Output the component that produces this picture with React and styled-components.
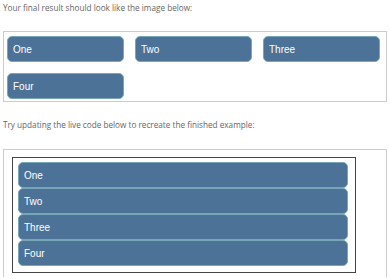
import styled, { createGlobalStyle } from "styled-components";

const GlobalStyle = createGlobalStyle`
  body {
    margin: 0;
    background: #fff;
    font-family: "Liberation Sans", Arial, sans-serif;
  }
`;

const Page = styled.div`
  width: 390px;
  padding: 0 3px;
  box-sizing: border-box;
`;

const Caption = styled.p`
  margin: ${(p) => p.$top || 0}px 0 0;
  font-family: "Open Sans", sans-serif;
  font-size: 8.2px;
  line-height: 16px;
  color: #666;
`;

const Frame = styled.div`
  margin-top: ${(p) => p.$top}px;
  border: 1px solid #ccc;
  border-bottom: ${(p) => (p.$open ? "none" : "1px solid #ccc")};
  padding: ${(p) => p.$pad};
`;

const Grid = styled.div`
  display: grid;
  grid-template-columns: repeat(3, 1fr);
  column-gap: 11px;
  row-gap: 11px;
`;

const Item = styled.div`
  box-sizing: border-box;
  height: 26px;
  display: flex;
  align-items: center;
  padding: 0 5px;
  background-color: #4d7298;
  border: 1px solid #77a6b6;
  border-radius: 5px;
  color: #fff;
  font-size: 10px;
`;

const Live = styled.div`
  width: 344px;
  box-sizing: border-box;
  border: 1px solid #444;
  padding: 4px 7px 6px 5px;
`;

const items = ["One", "Two", "Three", "Four"];

export default function App() {
  return (
    <>
      <GlobalStyle />
      <Page>
        <Caption>Your final result should look like the image below:</Caption>
        <Frame $top={15} $pad="4px 6px 2px 3px">
          <Grid>
            {items.map((item) => (
              <Item key={item}>{item}</Item>
            ))}
          </Grid>
        </Frame>
        <Caption $top={15}>
          Try updating the live code below to recreate the finished example:
        </Caption>
        <Frame $top={16} $open $pad="7px 8px 4px">
          <Live>
            {items.map((item) => (
              <Item key={item}>{item}</Item>
            ))}
          </Live>
        </Frame>
      </Page>
    </>
  );
}
